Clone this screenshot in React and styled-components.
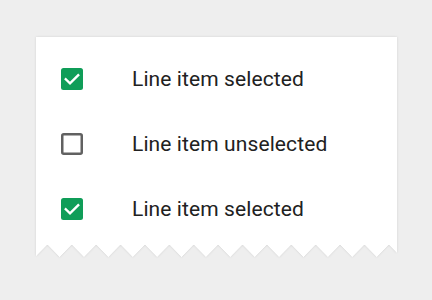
import React from "react";
import styled, { createGlobalStyle } from "styled-components";

const Global = createGlobalStyle`
  html, body {
    margin: 0;
    padding: 0;
    background: #eeeeee;
  }
  body {
    font-family: Roboto, "Noto Sans", "Liberation Sans", sans-serif;
  }
`;

const Page = styled.div`
  width: 432px;
  height: 300px;
  box-sizing: border-box;
  padding: 37px 0 0 36px;
  background: #eeeeee;
`;

const Sheet = styled.div`
  width: 361px;
  filter: drop-shadow(0 0 1px rgba(0, 0, 0, 0.12));
`;

const Body = styled.div`
  background: #ffffff;
  padding: 9px 0 4px 25px;
  display: flex;
  flex-direction: column;
`;

const Tear = styled.div`
  height: 12px;
  background: #ffffff;
  -webkit-mask: conic-gradient(from -45deg at bottom, #0000, #000 1deg 89deg, #0000 90deg) -13px 0 / 24.4px 100%;
  mask: conic-gradient(from -45deg at bottom, #0000, #000 1deg 89deg, #0000 90deg) -13px 0 / 24.4px 100%;
`;

const Row = styled.div`
  display: flex;
  align-items: center;
  height: 65px;
  gap: 49px;
`;

const Label = styled.span`
  font-size: 21px;
  color: #212121;
  letter-spacing: 0.1px;
`;

const Box = styled.svg`
  width: 22px;
  height: 22px;
  flex: none;
  display: block;
`;

function Checkbox({ checked }) {
  return checked ? (
    <Box viewBox="0 0 22 22">
      <rect x="0" y="0" width="22" height="22" rx="2.5" fill="#0f9d58" />
      <polyline
        points="4.8,11.3 9,15.4 17.2,7.2"
        fill="none"
        stroke="#ffffff"
        strokeWidth="2.4"
        strokeLinecap="square"
      />
    </Box>
  ) : (
    <Box viewBox="0 0 22 22">
      <rect x="1.25" y="1.25" width="19.5" height="19.5" rx="1.5" fill="none" stroke="#616161" strokeWidth="2.5" />
    </Box>
  );
}

const items = [
  { label: "Line item selected", checked: true },
  { label: "Line item unselected", checked: false },
  { label: "Line item selected", checked: true },
];

export default function App() {
  return (
    <>
      <Global />
      <Page>
        <Sheet>
          <Body>
            {items.map((it, i) => (
              <Row key={i}>
                <Checkbox checked={it.checked} />
                <Label>{it.label}</Label>
              </Row>
            ))}
          </Body>
          <Tear />
        </Sheet>
      </Page>
    </>
  );
}
